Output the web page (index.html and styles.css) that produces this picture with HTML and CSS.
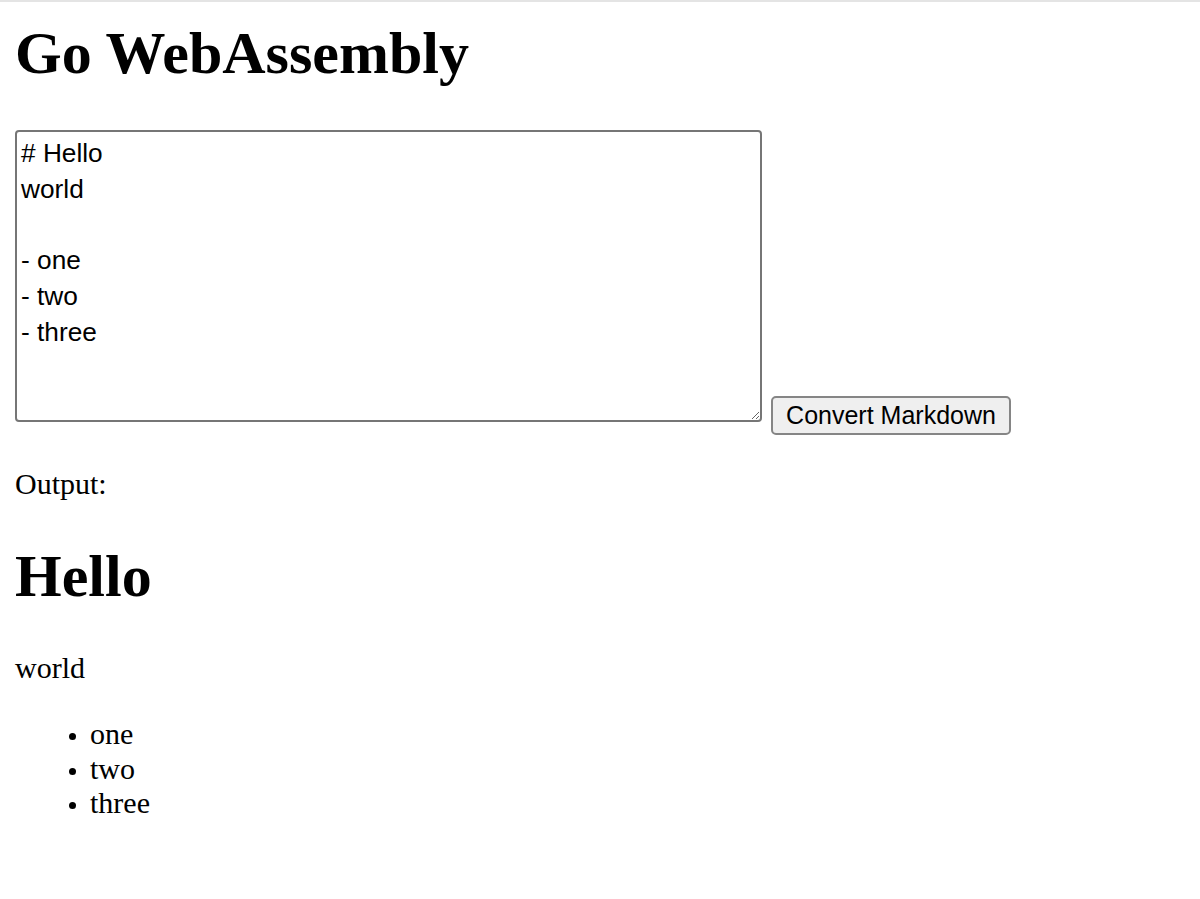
FILE: index.html
```html
<!DOCTYPE html>
<html lang="en">
<head>
<meta charset="utf-8">
<title>Go WebAssembly</title>
<link rel="stylesheet" href="styles.css">
</head>
<body>
<div class="topline"></div>
<main class="page">
  <h1 class="title">Go WebAssembly</h1>
  <div class="editor-row">
    <textarea class="editor" spellcheck="false"># Hello
world

- one
- two
- three</textarea>
    <button class="convert" type="button">Convert Markdown</button>
  </div>
  <p class="label">Output:</p>
  <div class="output">
    <h1 class="out-h1">Hello</h1>
    <p class="out-p">world</p>
    <ul class="out-list">
      <li>one</li>
      <li>two</li>
      <li>three</li>
    </ul>
  </div>
</main>
</body>
</html>
```
FILE: styles.css
```css
html, body {
  margin: 0;
  padding: 0;
  background: #ffffff;
}

body {
  font-family: "Liberation Serif", "Times New Roman", serif;
  font-size: 30px;
  line-height: 34.5px;
  color: #000000;
}

.topline {
  height: 2px;
  background: #e4e4e4;
}

.page {
  padding: 0 15px;
}

.title {
  font-size: 60px;
  line-height: 69px;
  font-weight: bold;
  margin: 17px 0 40px;
}

.editor-row {
  display: flex;
  align-items: flex-end;
  gap: 9px;
}

.editor {
  box-sizing: border-box;
  width: 747px;
  height: 292px;
  margin: 2px 0 13px;
  padding: 4px 4px 3px;
  border: 2px solid #767676;
  border-radius: 4px;
  font-family: "Liberation Sans", Arial, Helvetica, sans-serif;
  font-size: 26.25px;
  line-height: 35.7px;
  color: #000000;
  background: #ffffff;
  resize: both;
  outline: none;
}

.convert {
  box-sizing: border-box;
  height: 39px;
  width: 240px;
  padding: 0 12px;
  margin: 0;
  border: 2px solid #858585;
  border-radius: 5px;
  background: #efefef;
  font-family: "Liberation Sans", Arial, Helvetica, sans-serif;
  font-size: 25px;
  line-height: 29px;
  color: #000000;
}

.label {
  margin: 32px 0 0;
}

.out-h1 {
  font-size: 60px;
  line-height: 69px;
  font-weight: bold;
  margin: 40px 0;
}

.out-p {
  margin: 0 0 32px;
}

.out-list {
  margin: 0;
  padding-left: 75px;
}

.out-list li::marker {
  font-size: 24px;
}
```
